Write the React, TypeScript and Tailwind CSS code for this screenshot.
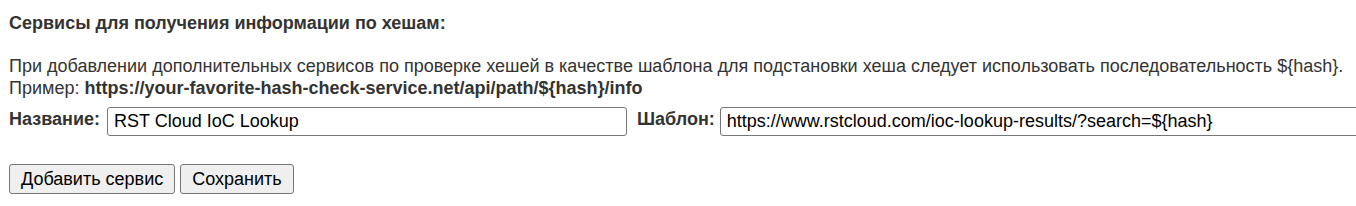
export default function App() {
  return (
    <div className="min-h-screen bg-white pl-[9px] pt-[13px] font-['Liberation_Sans',Arial,sans-serif] text-[18px] text-[#333]">
      <h3 className="text-[18px] font-bold leading-[20px]">Сервисы для получения информации по хешам:</h3>

      <p className="mt-[22px] leading-[22px]">
        При добавлении дополнительных сервисов по проверке хешей в качестве шаблона для подстановки хеша следует
        использовать последовательность ${"{hash}"}.
        <br />
        Пример: <b>https://your-favorite-hash-check-service.net/api/path/${"{hash}"}/info</b>
      </p>

      <div className="mt-[8px] flex items-start">
        <label className="pt-[2px] font-bold leading-[20px]">Название:</label>
        <input
          type="text"
          defaultValue="RST Cloud IoC Lookup"
          className="ml-[7px] h-[29px] w-[520px] shrink-0 rounded-[3px] border border-[#767676] bg-white px-[6px] text-[18px] text-black outline-none"
        />
        <label className="ml-[10px] pt-[2px] font-bold leading-[20px]">Шаблон:</label>
        <input
          type="text"
          defaultValue="https://www.rstcloud.com/ioc-lookup-results/?search=${hash}"
          className="ml-[5px] h-[29px] w-[660px] shrink-0 rounded-[3px] border border-[#767676] bg-white px-[6px] text-[18px] text-black outline-none"
        />
      </div>

      <div className="mt-[28px] flex gap-[5px]">
        <button
          type="button"
          className="h-[30px] rounded-[3px] border border-[#767676] bg-[#efefef] px-[11px] text-[18px] text-black"
        >
          Добавить сервис
        </button>
        <button
          type="button"
          className="h-[30px] rounded-[3px] border border-[#767676] bg-[#efefef] px-[11px] text-[18px] text-black"
        >
          Сохранить
        </button>
      </div>
    </div>
  )
}
